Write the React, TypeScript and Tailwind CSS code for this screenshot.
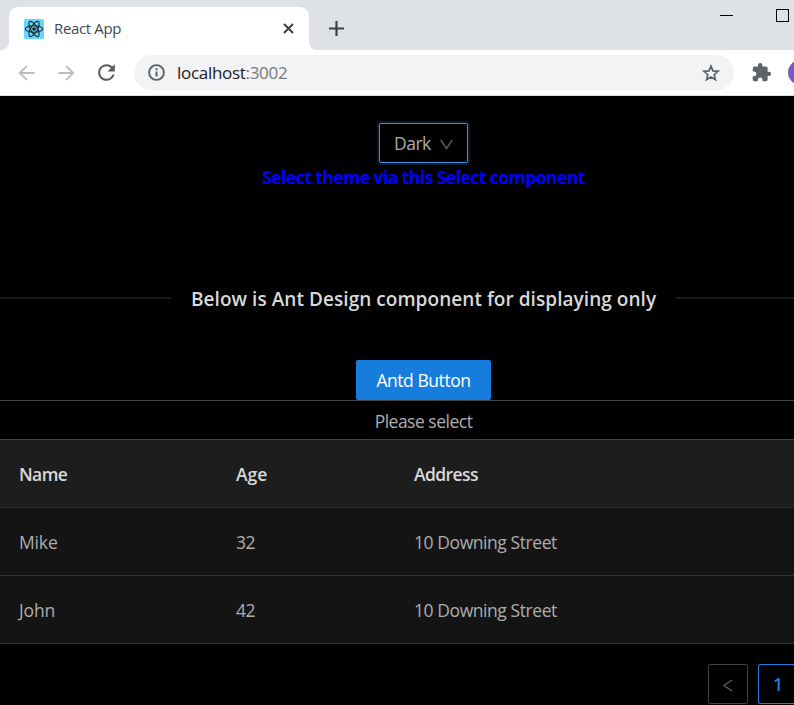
import type { ReactNode } from "react";
import { MdExtension, MdRefresh } from "react-icons/md";

interface Person {
  key: string;
  name: string;
  age: number;
  address: string;
}

const dataSource: Person[] = [
  { key: "1", name: "Mike", age: 32, address: "10 Downing Street" },
  { key: "2", name: "John", age: 42, address: "10 Downing Street" },
];

function ReactLogo() {
  return (
    <svg className="w-5 h-5" viewBox="0 0 20 20" fill="none">
      <rect width="20" height="20" rx="1.5" fill="#61dafb" />
      <g stroke="#20232a" strokeWidth="1.1">
        <ellipse cx="10" cy="10" rx="8.6" ry="3.3" />
        <ellipse cx="10" cy="10" rx="8.6" ry="3.3" transform="rotate(60 10 10)" />
        <ellipse cx="10" cy="10" rx="8.6" ry="3.3" transform="rotate(120 10 10)" />
      </g>
      <circle cx="10" cy="10" r="1.8" fill="#20232a" />
    </svg>
  );
}

function Arrow({ className }: { className: string }) {
  return (
    <svg className={className} width="18" height="18" viewBox="0 0 18 18" fill="none">
      <path d="M16.5 9H2M9 1.8L1.8 9L9 16.2" stroke="#babcbe" strokeWidth="1.8" />
    </svg>
  );
}

function InfoIcon() {
  return (
    <svg className="shrink-0" width="17" height="17" viewBox="0 0 17 17" fill="none">
      <circle cx="8.5" cy="8.5" r="7.4" stroke="#5f6368" strokeWidth="1.9" />
      <path d="M8.5 7.6V12.6M8.5 4.2V6.2" stroke="#5f6368" strokeWidth="2" />
    </svg>
  );
}

function StarIcon() {
  return (
    <svg className="ml-auto shrink-0" width="18" height="18" viewBox="0 0 18 18" fill="none">
      <path
        d="M9 2.2L11 6.9L16.1 7.3L12.2 10.7L13.4 15.7L9 13L4.6 15.7L5.8 10.7L1.9 7.3L7 6.9Z"
        stroke="#5f6368"
        strokeWidth="1.7"
      />
    </svg>
  );
}

function TabStrip() {
  return (
    <div className="flex h-[50px] bg-[#dee1e6]">
      <svg className="mt-[42px] ml-px shrink-0" width="8" height="8" viewBox="0 0 8 8">
        <path d="M8 0V8H0A8 8 0 0 0 8 0Z" fill="#fff" />
      </svg>
      <div className="mt-[7px] flex h-[43px] w-[300px] items-center rounded-t-[9px] bg-white pl-[15px] pb-[1px]">
        <span className="mt-px">
          <ReactLogo />
        </span>
        <span className="ml-[10px] text-[15px] tracking-[-0.35px] text-[#45494d]">React App</span>
        <svg className="ml-auto mr-[15px] mt-px" width="11" height="11" viewBox="0 0 11 11">
          <path d="M1 1L10 10M10 1L1 10" stroke="#3c4043" strokeWidth="2" />
        </svg>
      </div>
      <svg className="mt-[42px] shrink-0" width="8" height="8" viewBox="0 0 8 8">
        <path d="M0 0V8H8A8 8 0 0 1 0 0Z" fill="#fff" />
      </svg>
      <svg className="ml-[12px] mt-[21px]" width="15" height="15" viewBox="0 0 15 15">
        <path d="M7.5 0V15M0 7.5H15" stroke="#3c4043" strokeWidth="2.2" />
      </svg>
      <div className="ml-auto flex pr-[5px]">
        <div className="mt-[15px] h-px w-[13px] bg-black" />
        <div className="ml-[43px] mt-[9px] h-[13px] w-[13px] border border-black" />
      </div>
    </div>
  );
}

function Toolbar() {
  return (
    <div className="flex h-[46px] items-center overflow-hidden border-b border-[#dcdee1] bg-white pl-[18px]">
      <Arrow className="shrink-0" />
      <Arrow className="ml-[21px] shrink-0 rotate-180" />
      <MdRefresh className="ml-[19px] mr-px h-[25px] w-[25px] shrink-0 text-[#5a5d61]" />
      <div className="ml-[14px] flex h-[35px] w-[600px] shrink-0 items-center rounded-full bg-[#f1f3f4] pl-[14px] pr-[14px]">
        <InfoIcon />
        <span className="ml-[12px] text-[17px] tracking-[-0.3px] text-[#202124]">
          localhost<span className="text-[#75787c]">:3002</span>
        </span>
        <StarIcon />
      </div>
      <MdExtension className="ml-[17px] h-[21px] w-[21px] shrink-0 text-[#5f6368]" />
      <div className="ml-[16px] h-[25px] w-[25px] shrink-0 rounded-full bg-[#7e57c2]" />
    </div>
  );
}

function Divider({ children }: { children: ReactNode }) {
  return (
    <div className="mt-[85px] flex h-[48px] items-center">
      <div className="mb-[2px] h-[2px] flex-1 bg-[#1b1b1b]" />
      <span className="mx-5 w-[465px] whitespace-nowrap text-[19px] font-semibold tracking-[0.05px] text-[#d9d9d9]">
        {children}
      </span>
      <div className="mb-[2px] h-[2px] flex-1 bg-[#1b1b1b]" />
    </div>
  );
}

function Table() {
  return (
    <table className="w-full table-fixed border-separate border-spacing-0 text-left text-[17.5px]">
      <colgroup>
        <col className="w-[217px]" />
        <col className="w-[178px]" />
        <col />
      </colgroup>
      <thead>
        <tr className="h-[68px] bg-[#1d1d1d] tracking-[-0.6px] text-[#d9d9d9]">
          <th className="border-b border-[#303030] pl-[19px] pt-[2px] font-semibold">Name</th>
          <th className="border-b border-[#303030] pl-[19px] pt-[2px] font-semibold tracking-normal">Age</th>
          <th className="border-b border-[#303030] pl-[19px] pt-[2px] font-semibold">Address</th>
        </tr>
      </thead>
      <tbody>
        {dataSource.map((person) => (
          <tr key={person.key} className="h-[68px] bg-[#141414] tracking-[-0.43px] text-[#adadad]">
            <td className="border-b border-[#303030] pl-[19px] pt-[2px] tracking-[-0.15px]">{person.name}</td>
            <td className="border-b border-[#303030] pl-[19px] pt-[2px]">{person.age}</td>
            <td className="border-b border-[#303030] pl-[19px] pt-[2px]">{person.address}</td>
          </tr>
        ))}
      </tbody>
    </table>
  );
}

function Pagination() {
  return (
    <div className="mt-5 flex pl-[708px] text-[17.5px]">
      <button className="flex h-10 w-10 items-center justify-center rounded-[2px] border border-[#434343] pt-[2px]">
        <svg width="10" height="13" viewBox="0 0 10 13" fill="none">
          <path d="M9 1L1 6.5L9 12" stroke="#5c5c5c" strokeWidth="1.4" />
        </svg>
      </button>
      <button className="ml-[10px] h-10 w-10 rounded-[2px] border border-[#177ddc] pt-px font-semibold text-[#177ddc]">
        1
      </button>
    </div>
  );
}

export default function App() {
  return (
    <div className="h-[705px] w-[794px] overflow-hidden bg-black font-['Open_Sans',sans-serif]">
      <TabStrip />
      <Toolbar />

      {/* Page is wider than the window, so the right side is cut off */}
      <div className="w-[847px] pt-[27px]">
        <div className="flex flex-col items-center">
          <button className="flex h-10 w-[89px] items-center rounded-[2px] border border-[#3c93de] pl-[14px] text-[17.5px] tracking-[-0.5px] text-[#adadad] shadow-[0_0_0_2px_rgba(23,125,220,0.2)]">
            Dark
            <svg className="ml-auto mr-[14px] mt-[2px]" width="13" height="11" viewBox="0 0 13 11" fill="none">
              <path d="M0.8 1L6.5 9.5L12.2 1" stroke="#5c5c5c" strokeWidth="1.4" />
            </svg>
          </button>
          <span className="h-[27px] text-[17.5px] font-bold leading-[28px] tracking-[-0.54px] text-[#0000ff]">
            Select theme via this Select component
          </span>
        </div>

        <Divider>Below is Ant Design component for displaying only</Divider>

        <div className="mt-[37px] flex justify-center">
          <button className="h-10 w-[135px] rounded-[2px] bg-[#177ddc] text-[17.5px] tracking-[-0.45px] text-white">
            Antd Button
          </button>
        </div>
        <div className="h-10 border-y border-[#434343] pt-px text-center text-[17.5px] leading-[38px] tracking-[-0.5px] text-[#adadad]">
          Please select
        </div>
        <Table />
        <Pagination />
      </div>
    </div>
  );
}
